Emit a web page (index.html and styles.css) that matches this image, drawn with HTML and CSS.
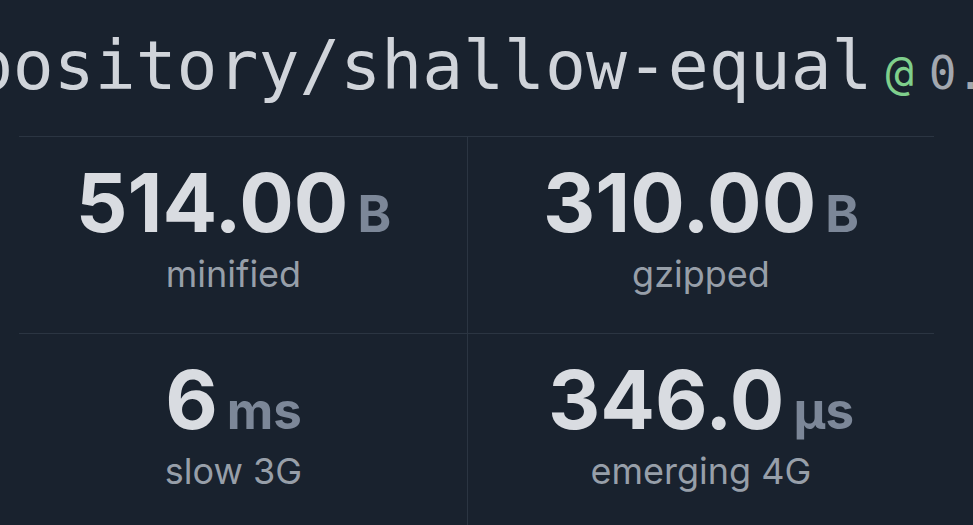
FILE: index.html
```html
<!DOCTYPE html>
<html lang="en">
<head>
<meta charset="utf-8">
<title>shallow-equal</title>
<link rel="stylesheet" href="styles.css">
</head>
<body>
  <header class="title">
    <span class="pkg-name">repository/shallow-equal</span><span class="pkg-at">@</span><span class="pkg-version">0.1.2</span>
  </header>
  <section class="stats">
    <div class="rule"></div>
    <div class="stat">
      <div class="value">514.00<span class="unit">B</span></div>
      <div class="label">minified</div>
    </div>
    <div class="stat stat-right">
      <div class="value">310.00<span class="unit">B</span></div>
      <div class="label">gzipped</div>
    </div>
    <div class="rule"></div>
    <div class="stat">
      <div class="value">6<span class="unit">ms</span></div>
      <div class="label">slow 3G</div>
    </div>
    <div class="stat stat-right">
      <div class="value">346.0<span class="unit">µs</span></div>
      <div class="label">emerging 4G</div>
    </div>
  </section>
</body>
</html>
```

FILE: styles.css
```css
html, body {
  margin: 0;
  padding: 0;
  background: #19222e;
  overflow: hidden;
}

body {
  width: 973px;
  height: 525px;
  font-family: "Inter", "Liberation Sans", sans-serif;
}

.title {
  white-space: nowrap;
  padding: 33px 0 37px;
  margin-left: -110px;
  line-height: 66px;
  height: 66px;
  font-family: "DejaVu Sans Mono", "Liberation Mono", monospace;
}

.pkg-name {
  font-size: 68px;
  color: #d0d4da;
}

.pkg-at {
  font-size: 47px;
  color: #7fcf8c;
  margin-left: 13px;
}

.pkg-version {
  font-size: 46px;
  color: #a3a8b0;
  margin-left: 15px;
}

.stats {
  display: grid;
  grid-template-columns: 467px 467px;
  width: 934px;
}

.rule {
  grid-column: 1 / -1;
  height: 1px;
  margin-left: 19px;
  background: #2b3542;
}

.stat {
  display: flex;
  flex-direction: column;
  align-items: center;
  padding: 27px 0 37px;
}

.stat-right {
  border-left: 1px solid #2b3542;
}

.value {
  font-size: 81px;
  line-height: 78px;
  font-weight: 700;
  color: #d9dce1;
  white-space: nowrap;
}

.unit {
  font-size: 51px;
  color: #7c8798;
  margin-left: 9px;
}

.label {
  margin-top: 0;
  font-size: 36px;
  line-height: 43px;
  color: #979fa9;
  font-weight: 400;
}
```
